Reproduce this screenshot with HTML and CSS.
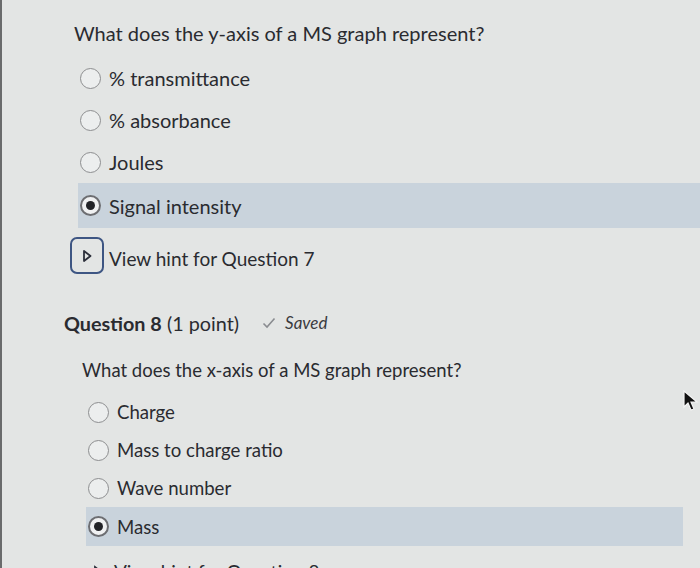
FILE: index.html
```html
<!DOCTYPE html>
<html>
<head>
<meta charset="utf-8">
<link rel="stylesheet" href="styles.css">
</head>
<body>
<div class="page">
  <section class="q7">
    <h2 class="qtext q7-text">What does the y-axis of a MS graph represent?</h2>
    <div class="opts">
      <div class="opt"><span class="radio"></span><span>% transmittance</span></div>
      <div class="opt"><span class="radio"></span><span>% absorbance</span></div>
      <div class="opt"><span class="radio"></span><span>Joules</span></div>
      <div class="opt sel"><span class="radio on"></span><span>Signal intensity</span></div>
    </div>
    <div class="hint">
      <span class="hint-btn"><svg width="12" height="14" viewBox="0 0 12 14"><path d="M3 2 L9.5 7 L3 12 Z" fill="none" stroke="#2c2f3a" stroke-width="1.8" stroke-linejoin="round"/></svg></span>
      <span class="hint-text">View hint for Question 7</span>
    </div>
  </section>

  <section class="q8">
    <div class="qhead"><b>Question 8</b> (1 point) <span class="saved"><svg width="14" height="12" viewBox="0 0 14 12"><path d="M1.5 6.5 L5 10 L12.5 1.5" fill="none" stroke="#8a8c90" stroke-width="1.6"/></svg><i>Saved</i></span></div>
    <p class="qtext q8-text">What does the x-axis of a MS graph represent?</p>
    <div class="opts opts2">
      <div class="opt"><span class="radio"></span><span>Charge</span></div>
      <div class="opt"><span class="radio"></span><span>Mass to charge ratio</span></div>
      <div class="opt"><span class="radio"></span><span>Wave number</span></div>
      <div class="opt sel"><span class="radio on"></span><span>Mass</span></div>
    </div>
    <div class="hint hint2">
      <svg width="12" height="14" viewBox="0 0 12 14"><path d="M3 2 L9.5 7 L3 12 Z" fill="none" stroke="#2c2f3a" stroke-width="1.8"/></svg>
      <span class="hint-text">View hint for Question 8</span>
    </div>
  </section>

  <svg class="cursor" width="16" height="22" viewBox="0 0 16 22"><path d="M1 1 L1 17 L5 13 L8 20 L11 19 L8 12 L14 12 Z" fill="#111" stroke="#f4f4f4" stroke-width="1.2"/></svg>
</div>
</body>
</html>
```

FILE: styles.css
```css
html, body {
  margin: 0;
  padding: 0;
}
body {
  width: 700px;
  height: 568px;
  overflow: hidden;
  background: #e3e5e4;
  font-family: Lato, "Open Sans", sans-serif;
  color: #2a2b30;
}
.page {
  position: relative;
  height: 568px;
  border-left: 2px solid #6a6b6c;
  box-sizing: border-box;
}
.qtext {
  margin: 0;
  font-weight: 400;
  line-height: 24px;
}
.q7 {
  padding-top: 21px;
  padding-left: 72px;
}
.q7-text {
  font-size: 20px;
}
.opts {
  margin-top: 12px;
  margin-left: 4px;
}
.opt {
  display: flex;
  align-items: center;
  gap: 8px;
  height: 42px;
  padding-left: 2px;
  font-size: 20px;
}
.opt.sel {
  height: 45px;
  background: #c9d3dc;
}
.radio {
  width: 21px;
  height: 21px;
  border-radius: 50%;
  border: 1.5px solid #8d8e90;
  background: #eceeee;
  box-sizing: border-box;
  display: flex;
  align-items: center;
  justify-content: center;
  flex: none;
}
.radio.on {
  border: 2px solid #6d6e72;
  background: #f0f1f2;
}
.radio.on::after {
  content: "";
  width: 9px;
  height: 9px;
  border-radius: 50%;
  background: #222327;
}
.hint {
  display: flex;
  align-items: center;
  gap: 5px;
  margin-top: 9px;
  margin-left: -4px;
  font-size: 19px;
}
.hint .hint-text {
  padding-top: 6px;
}
.hint-btn {
  width: 34px;
  height: 37px;
  border: 2px solid #3e5683;
  border-radius: 7px;
  box-sizing: border-box;
  display: flex;
  align-items: center;
  justify-content: center;
}
.q8 {
  padding-left: 62px;
  padding-top: 37px;
}
.qhead {
  font-size: 19.8px;
  line-height: 24px;
  display: flex;
  align-items: center;
  white-space: pre;
}
.qhead b {
  font-weight: 700;
}
.saved {
  display: inline-flex;
  align-items: center;
  gap: 9px;
  margin-left: 18px;
  font-size: 17px;
  color: #3a3b40;
}
.q8-text {
  font-size: 18.5px;
  margin-top: 23px;
  margin-left: 18px;
}
.opts2 {
  margin-top: 11px;
  margin-left: 22px;
  width: 597px;
}
.opts2 .opt {
  height: 38px;
  font-size: 18.6px;
}
.opts2 .opt.sel {
  height: 39px;
}
.hint2 {
  margin-top: 14px;
  margin-left: 28px;
  gap: 10px;
}
.hint2 .hint-text {
  padding-top: 0;
}
.cursor {
  position: absolute;
  left: 681px;
  top: 390px;
}
```
